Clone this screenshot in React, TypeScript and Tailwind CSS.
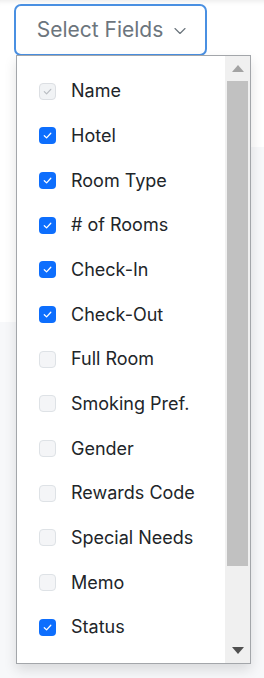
import { ChevronDown } from 'lucide-react'

type Field = { label: string; checked: boolean; disabled?: boolean }

const fields: Field[] = [
  { label: 'Name', checked: true, disabled: true },
  { label: 'Hotel', checked: true },
  { label: 'Room Type', checked: true },
  { label: '# of Rooms', checked: true },
  { label: 'Check-In', checked: true },
  { label: 'Check-Out', checked: true },
  { label: 'Full Room', checked: false },
  { label: 'Smoking Pref.', checked: false },
  { label: 'Gender', checked: false },
  { label: 'Rewards Code', checked: false },
  { label: 'Special Needs', checked: false },
  { label: 'Memo', checked: false },
  { label: 'Status', checked: true },
]

function Check({ checked, disabled }: { checked: boolean; disabled?: boolean }) {
  if (disabled) {
    return (
      <span className="w-[17px] h-[17px] rounded-[4px] border border-[#dcdfe3] bg-[#f1f3f5] flex items-center justify-center shrink-0">
        <svg width="11" height="11" viewBox="0 0 12 12" fill="none">
          <path d="M2.5 6.2 L5 8.6 L9.6 3.6" stroke="#b9bdc2" strokeWidth="1.3" strokeLinecap="round" strokeLinejoin="round" />
        </svg>
      </span>
    )
  }
  if (checked) {
    return (
      <span className="w-[17px] h-[17px] rounded-[4px] bg-[#0d6efd] flex items-center justify-center shrink-0">
        <svg width="11" height="11" viewBox="0 0 12 12" fill="none">
          <path d="M2.5 6.2 L5 8.6 L9.6 3.6" stroke="#ffffff" strokeWidth="1.4" strokeLinecap="round" strokeLinejoin="round" />
        </svg>
      </span>
    )
  }
  return <span className="w-[17px] h-[17px] rounded-[4px] border border-[#dee2e6] bg-[#f4f5f7] shrink-0" />
}

export default function App() {
  return (
    <div className="relative w-[264px] h-[678px] bg-[#f7f8fa] overflow-hidden" style={{ fontFamily: 'Inter, "Noto Sans", sans-serif' }}>
      {/* page behind the menu */}
      <div className="h-[147px] bg-white shadow-[inset_0_6px_6px_-6px_rgba(0,0,0,0.12)]" />
      <div className="w-[30px] h-[175px] bg-white" />

      {/* trigger */}
      <div className="absolute left-[14px] top-[4px]">
        <button className="w-[193px] h-[52px] rounded-[7px] border-2 border-[#4a90e2] bg-white flex items-center justify-center gap-[7px] pl-[6px] text-[21px] text-[#6c757d]">
          <span>Select Fields</span>
          <ChevronDown size={20} strokeWidth={1.4} className="mt-[1px]" />
        </button>
      </div>

      {/* menu */}
      <div className="absolute left-[16px] top-[55px] w-[235px] h-[609px] bg-white border border-[#a3a6aa] shadow-[0_6px_12px_rgba(0,0,0,0.12)] flex">
        <ul className="flex-1 pt-[13px]">
          {fields.map((f) => (
            <li key={f.label} className="h-[44.67px] flex items-center pl-[22px] gap-[15px]">
              <Check checked={f.checked} disabled={f.disabled} />
              <span className="text-[18px] text-[#212529] leading-none">{f.label}</span>
            </li>
          ))}
        </ul>
        {/* scrollbar */}
        <div className="w-[25px] bg-[#f0f0f0] flex flex-col items-center">
          <div className="h-[25px] flex items-center justify-center">
            <svg width="12" height="7" viewBox="0 0 12 7"><path d="M0 7 L6 0 L12 7 Z" fill="#a3a3a3" /></svg>
          </div>
          <div className="w-[21px] h-[485px] bg-[#c1c1c1]" />
          <div className="flex-1" />
          <div className="h-[25px] flex items-center justify-center">
            <svg width="12" height="7" viewBox="0 0 12 7"><path d="M0 0 L12 0 L6 7 Z" fill="#505050" /></svg>
          </div>
        </div>
      </div>
    </div>
  )
}
